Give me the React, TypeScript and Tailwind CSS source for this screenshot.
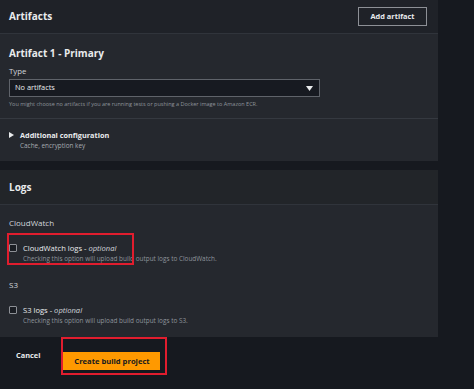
import React from 'react';

const Checkbox: React.FC = () => (
  <div className="w-[8px] h-[8px] mt-[2px] border border-[#8d9096] rounded-[1px] bg-[#1a1d23] flex-shrink-0" />
);

const LogOption: React.FC<{ title: string; desc: string }> = ({ title, desc }) => (
  <div className="flex gap-[6px]">
    <Checkbox />
    <div className="flex flex-col">
      <span className="text-[7.6px] leading-[12px] text-[#e9ebed]">
        {title} - <i className="text-[#d1d5db]">optional</i>
      </span>
      <span className="text-[6.4px] leading-[10px] text-[#8e949b]">{desc}</span>
    </div>
  </div>
);

export default function App() {
  return (
    <div className="w-[474px] h-[389px] bg-[#16191f] overflow-hidden text-[#e9ebed]" style={{ fontFamily: '"Open Sans", "Noto Sans", sans-serif' }}>
      <div className="w-[438px]">
        {/* Artifacts */}
        <div className="bg-[#25282e]">
          <div className="h-[34px] bg-[#1f2228] border-b border-[#30343b] flex items-center justify-between px-[9px]">
            <h2 className="text-[10px] font-bold">Artifacts</h2>
            <button className="h-[19px] w-[69px] border border-[#8d9096] text-[7.4px] font-bold text-[#e9ebed] mr-[2px]">Add artifact</button>
          </div>
          <div className="h-[85px] border-b border-[#353940] px-[9px] pt-[11px]">
            <h3 className="text-[10px] font-bold leading-[16px]">Artifact 1 - Primary</h3>
            <div className="text-[7.8px] leading-[12px] mt-[4px] text-[#d1d5db]">Type</div>
            <div className="mt-[2px] w-[311px] h-[18px] bg-[#171a21] border border-[#5f636a] flex items-center justify-between pl-[5px] pr-[6px]">
              <span className="text-[7.4px] text-[#e9ebed]">No artifacts</span>
              <svg width="7" height="5" viewBox="0 0 7 5"><path d="M0 0 L7 0 L3.5 5 Z" fill="#e9ebed" /></svg>
            </div>
            <div className="text-[5.5px] leading-[10px] mt-[2px] text-[#8e949b]">You might choose no artifacts if you are running tests or pushing a Docker image to Amazon ECR.</div>
          </div>
          <div className="h-[42px] px-[9px] pt-[10px]">
            <div className="flex items-center gap-[6px]">
              <svg width="5" height="6" viewBox="0 0 5 6"><path d="M0 0 L5 3 L0 6 Z" fill="#e9ebed" /></svg>
              <span className="text-[7.3px] font-bold leading-[12px]">Additional configuration</span>
            </div>
            <div className="text-[6.4px] leading-[10px] pl-[11px] text-[#a7abb1]">Cache, encryption key</div>
          </div>
        </div>

        {/* Logs */}
        <div className="mt-[9px] bg-[#25282e] h-[167px]">
          <div className="h-[35px] bg-[#222529] border-b border-[#30343b] flex items-center px-[9px]">
            <h2 className="text-[10px] font-bold">Logs</h2>
          </div>
          <div className="px-[9px] pt-[11px]">
            <div className="text-[8px] leading-[14px] text-[#d1d5db]">CloudWatch</div>
            <div className="relative mt-[12px]">
              <LogOption title="CloudWatch logs" desc="Checking this option will upload build output logs to CloudWatch." />
              <div className="absolute left-[-2px] top-[-9px] w-[127px] h-[32px] border-2 border-[#e11d2e] pointer-events-none" />
            </div>
            <div className="text-[8px] leading-[14px] mt-[14px] text-[#d1d5db]">S3</div>
            <div className="mt-[12px]">
              <LogOption title="S3 logs" desc="Checking this option will upload build output logs to S3." />
            </div>
          </div>
        </div>

        {/* Footer */}
        <div className="flex items-center mt-[2px] h-[34px]">
          <button className="ml-[16px] text-[7.4px] font-bold text-[#e9ebed]">Cancel</button>
          <div className="ml-[21px] border-2 border-[#e11d2e] pt-[7px] pb-[3px] pr-[5px]">
            <button className="h-[18px] w-[97px] bg-[#ff9900] text-[7.6px] font-bold text-[#16191f]">Create build project</button>
          </div>
        </div>
      </div>
    </div>
  );
}
